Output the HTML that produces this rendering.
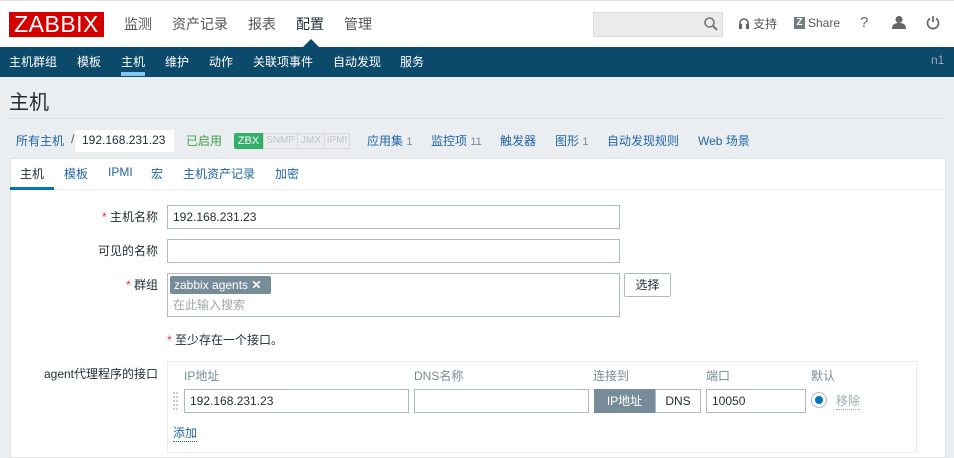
<!DOCTYPE html>
<html><head><meta charset="utf-8"><style>
*{box-sizing:border-box;margin:0;padding:0}
body{width:954px;height:457px;overflow:hidden;background:#ebeef0;font-family:"Liberation Sans","Noto Sans CJK SC",sans-serif;font-size:12px;color:#1f2c33;position:relative}
.a{position:absolute;white-space:nowrap}
.hdr{left:0;top:0;width:954px;height:47px;background:#fff;border-top:1px solid #e2e2e2}
.nav{left:0;top:47px;width:954px;height:30px;background:#0b4a6b}
.inp{position:absolute;background:#fff;border:1px solid #acbbc3;height:24px;padding:4px 5px;font-size:12px;line-height:15px}
.lnk{color:#1f65a8}
.lbl{text-align:right;width:148px;left:10px}
.t{top:132px}
</style></head><body>
<div class="a hdr"></div>
<div class="a" style="left:9px;top:12px;width:95px;height:25px;background:#d40000;color:#fff;font-size:23px;line-height:25px;text-align:center;letter-spacing:0.5px">ZABBIX</div>
<div class="a" style="left:124px;top:14px;font-size:14px;color:#555">监测</div>
<div class="a" style="left:172px;top:14px;font-size:14px;color:#555">资产记录</div>
<div class="a" style="left:248px;top:14px;font-size:14px;color:#555">报表</div>
<div class="a" style="left:296px;top:14px;font-size:14px;color:#1f2c33">配置</div>
<div class="a" style="left:344px;top:14px;font-size:14px;color:#555">管理</div>
<div class="a" style="left:303px;top:39px;width:0;height:0;border-left:8px solid transparent;border-right:8px solid transparent;border-bottom:8px solid #0b4a6b"></div>
<div class="a" style="left:593px;top:12px;width:130px;height:25px;background:#ebebeb;border:1px solid #ddd"></div>
<svg class="a" style="left:703px;top:16px" width="16" height="16"><circle cx="6.5" cy="6.5" r="4.5" fill="none" stroke="#777" stroke-width="1.6"/><line x1="10" y1="10" x2="14" y2="14" stroke="#777" stroke-width="2"/></svg>
<svg class="a" style="left:738px;top:17px" width="12" height="13"><path d="M2 8V6a4 4 0 0 1 8 0v2" fill="none" stroke="#666" stroke-width="1.6"/><rect x="1" y="7" width="3" height="5" fill="#666"/><rect x="8" y="7" width="3" height="5" fill="#666"/></svg>
<div class="a" style="left:753px;top:15px;font-size:12px;color:#555">支持</div>
<div class="a" style="left:794px;top:17px;width:11px;height:12px;background:#727b81;color:#fff;font-size:10px;font-weight:bold;text-align:center;line-height:12px">Z</div>
<div class="a" style="left:808px;top:16px;font-size:12px;color:#555">Share</div>
<div class="a" style="left:860px;top:14px;font-size:15px;color:#666">?</div>
<svg class="a" style="left:892px;top:15px" width="14" height="15"><circle cx="7" cy="4.5" r="3.5" fill="#666"/><path d="M0 14c0-5 3-6 7-6s7 1 7 6z" fill="#666"/></svg>
<svg class="a" style="left:926px;top:15px" width="14" height="15"><path d="M4 3.5a5.5 5.5 0 1 0 6 0" fill="none" stroke="#666" stroke-width="1.7"/><line x1="7" y1="1" x2="7" y2="7" stroke="#666" stroke-width="1.7"/></svg>
<div class="a nav"></div>
<div class="a" style="left:9px;top:53px;color:#fff">主机群组</div>
<div class="a" style="left:77px;top:53px;color:#fff">模板</div>
<div class="a" style="left:121px;top:53px;color:#fff">主机</div>
<div class="a" style="left:121px;top:72px;width:24px;height:4px;background:#7fc6f0"></div>
<div class="a" style="left:165px;top:53px;color:#fff">维护</div>
<div class="a" style="left:209px;top:53px;color:#fff">动作</div>
<div class="a" style="left:253px;top:53px;color:#fff">关联项事件</div>
<div class="a" style="left:333px;top:53px;color:#fff">自动发现</div>
<div class="a" style="left:400px;top:53px;color:#fff">服务</div>
<div class="a" style="left:931px;top:53px;color:#9aa9b2">n1</div>
<div class="a" style="left:9px;top:86px;font-size:20px;color:#1f2c33">主机</div>
<div class="a" style="left:9px;top:118px;width:936px;height:1px;background:#dce1e4"></div>
<div class="a lnk t" style="left:16px">所有主机</div>
<div class="a t" style="left:71px;color:#555">/</div>
<div class="a" style="left:75px;top:130px;width:99px;height:22px;background:#fff;border-radius:2px;padding:3px 7px;font-size:12px">192.168.231.23</div>
<div class="a t" style="left:186px;color:#429e47">已启用</div>
<div class="a" style="left:234px;top:133px;width:29px;height:16px;background:#34af67;color:#fff;font-size:11px;line-height:16px;text-align:center;border-radius:2px 0 0 2px">ZBX</div>
<div class="a" style="left:263px;top:133px;width:87px;height:16px;border:1px solid #d8d8d8;color:#c0c6c9;font-size:10px;line-height:14px;display:flex">
<span style="width:34px;text-align:center;border-right:1px solid #d8d8d8">SNMP</span><span style="width:27px;text-align:center;border-right:1px solid #d8d8d8">JMX</span><span style="flex:1;text-align:center">IPMI</span></div>
<div class="a lnk t" style="left:367px">应用集 <span style="color:#768d99;font-size:11px">1</span></div>
<div class="a lnk t" style="left:431px">监控项 <span style="color:#768d99;font-size:11px">11</span></div>
<div class="a lnk t" style="left:500px">触发器</div>
<div class="a lnk t" style="left:555px">图形 <span style="color:#768d99;font-size:11px">1</span></div>
<div class="a lnk t" style="left:607px">自动发现规则</div>
<div class="a lnk t" style="left:698px">Web 场景</div>
<div class="a" style="left:10px;top:158px;width:936px;height:300px;background:#fff;border:1px solid #dfe4e7"></div>
<div class="a" style="left:10px;top:189px;width:936px;height:1px;background:#ebeef0"></div>
<div class="a" style="left:20px;top:165px;color:#1f2c33">主机</div>
<div class="a" style="left:10px;top:187px;width:44px;height:3px;background:#0275b8"></div>
<div class="a lnk" style="left:64px;top:165px">模板</div>
<div class="a lnk" style="left:108px;top:165px">IPMI</div>
<div class="a lnk" style="left:151px;top:165px">宏</div>
<div class="a lnk" style="left:183px;top:165px">主机资产记录</div>
<div class="a lnk" style="left:275px;top:165px">加密</div>
<div class="a lbl" style="top:208px"><span style="color:#e33">*</span> 主机名称</div>
<div class="inp" style="left:167px;top:205px;width:453px">192.168.231.23</div>
<div class="a lbl" style="top:242px">可见的名称</div>
<div class="inp" style="left:167px;top:239px;width:453px"></div>
<div class="a lbl" style="top:276px"><span style="color:#e33">*</span> 群组</div>
<div class="inp" style="left:167px;top:273px;width:453px;height:44px;padding:2px"></div>
<div class="a" style="left:170px;top:276px;width:101px;height:18px;background:#768d99;color:#fff;padding:1px 4px;border-radius:2px;line-height:16px">zabbix agents <b>✕</b></div>
<div class="a" style="left:173px;top:296px;color:#a0a8ac">在此输入搜索</div>
<div class="a" style="left:624px;top:273px;width:47px;height:24px;border:1px solid #acbbc3;border-radius:2px;text-align:center;line-height:22px;background:#fff">选择</div>
<div class="a" style="left:167px;top:331px"><span style="color:#e33">*</span> 至少存在一个接口。</div>
<div class="a lbl" style="top:365px">agent代理程序的接口</div>
<div class="a" style="left:167px;top:361px;width:750px;height:92px;border:1px solid #ebeef0"></div>
<div class="a" style="left:184px;top:367px;color:#768d99">IP地址</div>
<div class="a" style="left:414px;top:367px;color:#768d99">DNS名称</div>
<div class="a" style="left:593px;top:367px;color:#768d99">连接到</div>
<div class="a" style="left:706px;top:367px;color:#768d99">端口</div>
<div class="a" style="left:811px;top:367px;color:#768d99">默认</div>
<div class="a" style="left:173px;top:392px;width:5px;height:18px;border-left:2px dotted #ccc;border-right:2px dotted #ccc"></div>
<div class="inp" style="left:184px;top:389px;width:225px">192.168.231.23</div>
<div class="inp" style="left:414px;top:389px;width:175px"></div>
<div class="a" style="left:594px;top:389px;width:61px;height:24px;background:#768d99;color:#fff;text-align:center;line-height:24px">IP地址</div>
<div class="a" style="left:655px;top:389px;width:46px;height:24px;border:1px solid #acbbc3;text-align:center;line-height:22px">DNS</div>
<div class="inp" style="left:706px;top:389px;width:100px">10050</div>
<div class="a" style="left:811px;top:392px;width:16px;height:16px;border:1px solid #acbbc3;border-radius:50%;background:#fff"><div style="margin:3px;width:8px;height:8px;border-radius:50%;background:#0275b8"></div></div>
<div class="a" style="left:836px;top:392px;color:#a0a8ac;border-bottom:1px dotted #a0a8ac">移除</div>
<div class="a lnk" style="left:173px;top:424px;border-bottom:1px dotted #1f65a8">添加</div>
</body></html>
